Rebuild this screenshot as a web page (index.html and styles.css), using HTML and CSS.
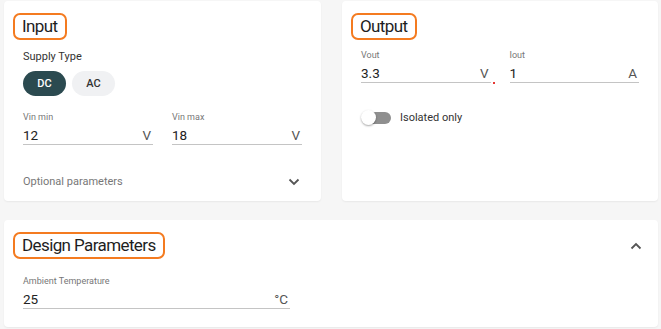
FILE: index.html
```html
<!DOCTYPE html>
<html>
    <head>
        <title>Converter search</title>
        <link rel="stylesheet" href="styles.css">
    </head>
    <body>
        <div class="page">
            <div class="top-row">
                <section class="card">
                    <h2 class="card-title">Input</h2>
                    <div class="group-label">Supply Type</div>
                    <div class="toggle-group">
                        <button class="pill pill-active">DC</button>
                        <button class="pill">AC</button>
                    </div>
                    <div class="field-row">
                        <div class="field">
                            <div class="field-label">Vin min</div>
                            <div class="field-input"><span>12</span><span class="unit">V</span></div>
                        </div>
                        <div class="field">
                            <div class="field-label">Vin max</div>
                            <div class="field-input"><span>18</span><span class="unit">V</span></div>
                        </div>
                    </div>
                    <div class="expander">
                        <span>Optional parameters</span>
                        <svg class="chevron" width="12" height="8" viewBox="0 0 12 8"><path d="M1.5 1.5 L6 6 L10.5 1.5" fill="none" stroke="#555" stroke-width="1.8"/></svg>
                    </div>
                </section>
                <section class="card">
                    <h2 class="card-title">Output</h2>
                    <div class="field-row field-row-tight">
                        <div class="field">
                            <div class="field-label">Vout</div>
                            <div class="field-input field-marked"><span>3.3</span><span class="unit">V</span></div>
                        </div>
                        <div class="field">
                            <div class="field-label">Iout</div>
                            <div class="field-input"><span>1</span><span class="unit">A</span></div>
                        </div>
                    </div>
                    <label class="switch-row">
                        <span class="switch"><span class="switch-knob"></span></span>
                        <span>Isolated only</span>
                    </label>
                </section>
            </div>
            <section class="card card-wide">
                <div class="card-head">
                    <h2 class="card-title">Design Parameters</h2>
                    <svg class="chevron" width="12" height="8" viewBox="0 0 12 8"><path d="M1.5 6.5 L6 2 L10.5 6.5" fill="none" stroke="#555" stroke-width="1.8"/></svg>
                </div>
                <div class="field field-long">
                    <div class="field-label">Ambient Temperature</div>
                    <div class="field-input"><span>25</span><span class="unit">°C</span></div>
                </div>
            </section>
        </div>
    </body>
</html>
```

FILE: styles.css
```css
body {
margin: 0;
background-color: #f6f6f6;
font-family: Roboto, "Liberation Sans", sans-serif;
color: #222;
}
.page {
padding: 1px 3px 2px 4px;
display: flex;
flex-direction: column;
gap: 19px;
}
.top-row {
display: grid;
grid-template-columns: 317px 316px;
gap: 21px;
height: 200px;
}
.card {
background-color: white;
border-radius: 4px;
box-shadow: 0 1px 2px rgba(0,0,0,0.06);
padding: 12px 19px 0 19px;
box-sizing: border-box;
}
.card-wide {
height: 107px;
padding-right: 16px;
}
.card-title {
display: inline-block;
margin: 0 0 0 -10px;
padding: 1px 7px;
font-size: 17px;
line-height: 21px;
font-weight: 400;
letter-spacing: -0.6px;
color: #1e1e1e;
border: 2px solid #f47b20;
border-radius: 7px;
}
.card-head {
display: flex;
justify-content: space-between;
align-items: center;
}
.group-label {
margin-top: 9px;
font-size: 11px;
line-height: 16px;
color: #333;
}
.toggle-group {
display: flex;
gap: 6px;
margin-top: 6px;
}
.pill {
width: 43px;
height: 25px;
border: none;
border-radius: 13px;
background-color: #f0f1f3;
color: #333;
font-family: Roboto, "Liberation Sans", sans-serif;
font-size: 11px;
font-weight: 500;
padding: 0;
}
.pill-active {
background-color: #2b4a50;
color: white;
}
.field-row {
display: flex;
gap: 19px;
margin-top: 15px;
}
.field-row-tight {
margin-top: 9px;
}
.field {
width: 130px;
}
.field-long {
width: 267px;
margin-top: 16px;
}
.field-label {
font-size: 9px;
line-height: 12px;
color: #777;
}
.field-input {
display: flex;
justify-content: space-between;
align-items: center;
height: 18px;
margin-top: 3px;
font-size: 13.5px;
border-bottom: 1px solid #c4c4c4;
position: relative;
}
.unit {
color: #555;
padding-right: 2px;
}
.field-marked::after {
content: "";
position: absolute;
right: -4px;
bottom: -2px;
width: 2px;
height: 2px;
background-color: #e53935;
}
.expander {
display: flex;
justify-content: space-between;
align-items: center;
margin-top: 30px;
padding-right: 2px;
font-size: 11px;
color: #777;
}
.switch-row {
display: flex;
align-items: center;
gap: 9px;
margin-top: 28px;
font-size: 11px;
color: #333;
}
.switch {
position: relative;
width: 28px;
height: 12px;
margin-left: 2px;
border-radius: 6px;
background-color: #8f8f8f;
}
.switch-knob {
position: absolute;
left: -2px;
top: -2px;
width: 15px;
height: 15px;
border-radius: 50%;
background-color: white;
box-shadow: 0 1px 2px rgba(0,0,0,0.35);
}
```
